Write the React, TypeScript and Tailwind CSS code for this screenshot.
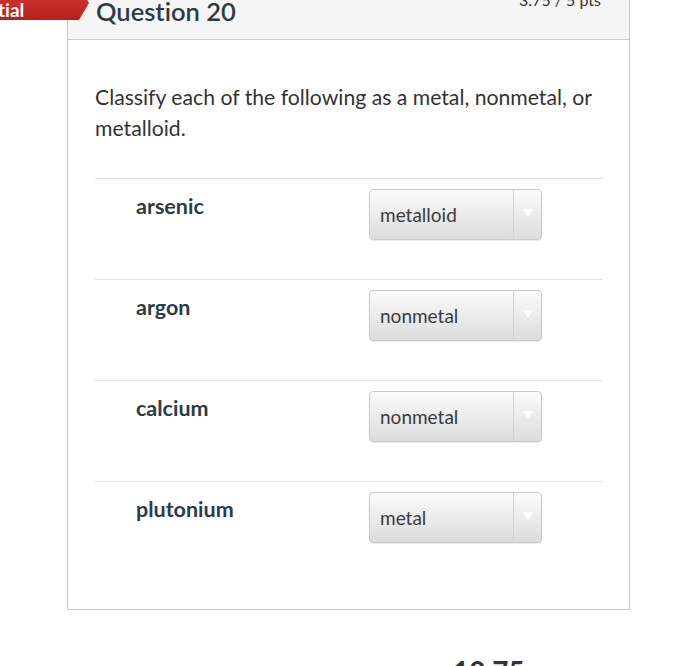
const rows = [
  { name: "arsenic", answer: "metalloid" },
  { name: "argon", answer: "nonmetal" },
  { name: "calcium", answer: "nonmetal" },
  { name: "plutonium", answer: "metal" },
]

function Select({ value }: { value: string }) {
  return (
    <div className="mt-[10px] flex h-[51px] w-[173px] rounded-[4px] border border-[#c9c9c9] bg-gradient-to-b from-[#fbfbfb] to-[#dcdcdc] shadow-[0_1px_1px_rgba(0,0,0,0.08)]">
      <div className="flex flex-1 items-center pl-[10px] pt-[2px] text-[19px] text-[#3b3b3b]">{value}</div>
      <div className="flex w-[28px] items-center justify-center border-l border-[#d2d2d2] pb-[4px]">
        <svg width="10" height="8" viewBox="0 0 10 8">
          <path d="M0 0 L10 0 L5 8 Z" fill="#ffffff" />
        </svg>
      </div>
    </div>
  )
}

export default function App() {
  return (
    <div className="relative h-[666px] w-[700px] overflow-hidden bg-white font-['Lato','Liberation_Sans',sans-serif] text-[#2d3b45] [font-variant-ligatures:none]">
      {/* partial badge */}
      <div className="absolute left-0 top-[-14px] flex h-[34px] w-[89px] items-center bg-gradient-to-b from-[#d93b36] to-[#b3211d] pt-[1px] text-[19px] font-bold text-white [clip-path:polygon(0_0,79px_0,89px_17px,79px_34px,0_34px)]">
        <span className="ml-[-2px] mt-[13px]">tial</span>
      </div>

      <div className="ml-[67px] mt-[-22px] w-[563px] border border-[#c4c9cc]">
        {/* header */}
        <div className="flex h-[61px] items-start justify-between border-b border-[#c4c9cc] bg-[#f5f5f5] px-[28px]">
          <div className="mt-[20px] text-[25.5px] font-semibold leading-[25px]">Question 20</div>
          <div className="mt-[13px] text-[16px] leading-[16px] text-[#333]">3.75 / 5 pts</div>
        </div>

        {/* body */}
        <div className="pl-[27px] pr-[27px] pt-[42px] pb-[27px]">
          <p className="text-[21.2px] leading-[31px] text-[#333]">
            Classify each of the following as a metal, nonmetal, or metalloid.
          </p>
          <div className="mt-[34px]">
            {rows.map((r) => (
              <div key={r.name} className="flex h-[101px] border-t border-[#e2e2e2]">
                <div className="mt-[15px] w-[274px] pl-[41px] text-[21.5px] font-bold leading-[24px]">{r.name}</div>
                <Select value={r.answer} />
              </div>
            ))}
          </div>
        </div>
      </div>

      <div className="ml-[453px] mt-[47px] text-[28px] font-bold leading-[28px] text-[#333]">10.75</div>
    </div>
  )
}
